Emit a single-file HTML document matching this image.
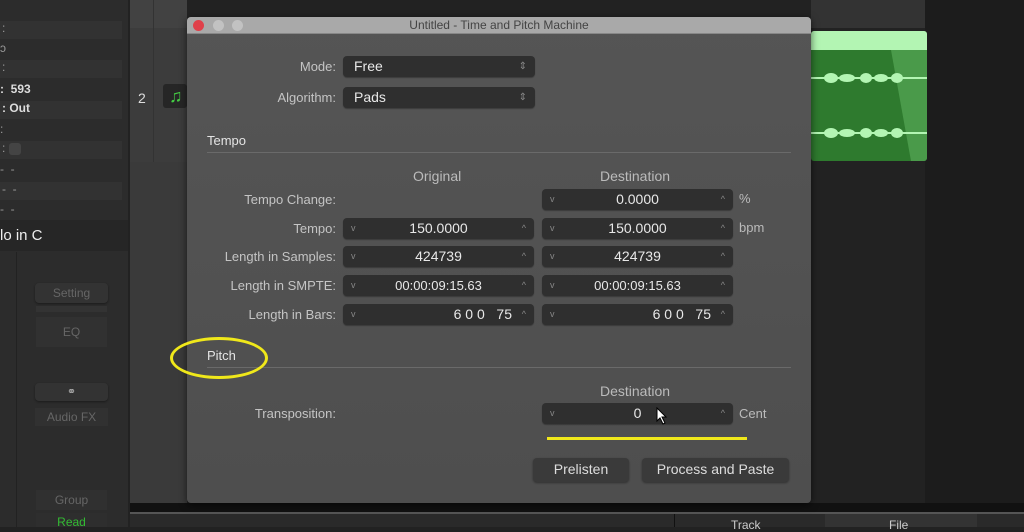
<!DOCTYPE html>
<html><head><meta charset="utf-8"><style>
*{margin:0;padding:0;box-sizing:border-box}
body{width:1024px;height:527px;overflow:hidden;background:#222;font-family:"Liberation Sans",sans-serif;position:relative}
.a{position:absolute}
.lbl{position:absolute;color:#c4c4c4;font-size:13px;text-align:right;width:200px}
.fld{position:absolute;background:#2f2f2f;border-radius:4px;height:21px;color:#e8e8e8;font-size:14px;text-align:center;line-height:21px;box-shadow:0 1px 1px rgba(0,0,0,.3)}
.fld .d{position:absolute;left:8px;top:0;font-size:9px;color:#888}
.fld .u{position:absolute;right:8px;top:0;font-size:9px;color:#888}
.btn{position:absolute;background:#3a3a3a;border-radius:4px;color:#ddd;font-size:14px;text-align:center;line-height:23px;height:24px;box-shadow:0 1px 2px rgba(0,0,0,.4)}
.hl{position:absolute;height:1px;background:#6a6a6a}
.lp{position:absolute;left:0;width:122px;height:18px;background:#323232;color:#ddd;font-size:12px;padding-left:2px}
</style></head><body>
<div class="a" style="left:0;top:0;width:128px;height:527px;background:#2c2c2c"></div>
<div class="lp" style="top:21px;color:#999">:</div>
<div class="a" style="left:0;top:41px;color:#999;font-size:12px">ↄ</div>
<div class="lp" style="top:60px;color:#999">:</div>
<div class="a" style="left:0;top:82px;color:#ddd;font-size:12px;font-weight:bold">: &nbsp;593</div>
<div class="lp" style="top:101px;font-weight:bold">: Out</div>
<div class="a" style="left:0;top:122px;color:#999;font-size:12px">:</div>
<div class="lp" style="top:141px;color:#999">: <span style="display:inline-block;width:12px;height:12px;background:#444;border-radius:3px;vertical-align:middle"></span></div>
<div class="a" style="left:0;top:162px;color:#999;font-size:12px">- &nbsp;-</div>
<div class="lp" style="top:182px;color:#999">- &nbsp;-</div>
<div class="a" style="left:0;top:202px;color:#999;font-size:12px">- &nbsp;-</div>
<div class="a" style="left:0;top:220px;width:128px;height:31px;background:#262626;color:#eee;font-size:15px;padding:7px 0 0 0">lo in C</div>
<div class="a" style="left:16px;top:252px;width:1px;height:275px;background:#222"></div>
<div class="btn" style="left:35px;top:283px;width:73px;height:20px;line-height:20px;font-size:12px;color:#666;background:#333">Setting</div>
<div class="a" style="left:36px;top:306px;width:71px;height:6px;background:#333"></div>
<div class="a" style="left:36px;top:317px;width:71px;height:30px;background:#313131;color:#666;font-size:12px;text-align:center;line-height:30px">EQ</div>
<div class="btn" style="left:35px;top:383px;width:73px;height:18px;line-height:18px;font-size:11px;color:#aaa;background:#333">&#9901;</div>
<div class="a" style="left:35px;top:408px;width:73px;height:18px;background:#313131;color:#666;font-size:12px;text-align:center;line-height:18px">Audio FX</div>
<div class="a" style="left:36px;top:490px;width:71px;height:20px;background:#303030;color:#666;font-size:12px;text-align:center;line-height:20px">Group</div>
<div class="a" style="left:36px;top:513px;width:71px;height:14px;background:#2e2e2e;color:#3b3;font-size:12px;text-align:center;line-height:18px">Read</div>
<div class="a" style="left:130px;top:0;width:57px;height:503px;background:#3a3a3a"></div>
<div class="a" style="left:130px;top:0;width:57px;height:28px;background:#424242"></div>
<div class="a" style="left:130px;top:28px;width:57px;height:134px;background:#3c3c3c"></div>
<div class="a" style="left:153px;top:0;width:1px;height:162px;background:#333"></div>
<div class="a" style="left:138px;top:90px;color:#ddd;font-size:14px">2</div>
<div class="a" style="left:163px;top:84px;width:24px;height:24px;background:#262626;border-radius:3px;color:#4c4;font-size:18px;line-height:24px;padding-left:6px">♫</div>
<div class="a" style="left:811px;top:0;width:114px;height:28px;background:#333"></div>
<div class="a" style="left:925px;top:0;width:99px;height:503px;background:#1c1c1c"></div>
<div class="a" style="left:811px;top:31px;width:116px;height:130px;background:#2e7a2e;border-radius:3px;overflow:hidden">
<div class="a" style="left:0;top:0;width:116px;height:19px;background:#b3f5b3"></div>
<svg class="a" style="left:0;top:0" width="116" height="130"><polygon points="80,19 116,19 116,130 100,130" fill="#4a9a4a"/>
<g fill="#b3f5b3"><rect x="0" y="46" width="116" height="2"/><rect x="0" y="101" width="116" height="2"/>
<ellipse cx="20" cy="47" rx="7" ry="5"/><ellipse cx="36" cy="47" rx="8" ry="4"/><ellipse cx="55" cy="47" rx="6" ry="5"/><ellipse cx="70" cy="47" rx="7" ry="4"/><ellipse cx="86" cy="47" rx="6" ry="5"/>
<ellipse cx="20" cy="102" rx="7" ry="5"/><ellipse cx="36" cy="102" rx="8" ry="4"/><ellipse cx="55" cy="102" rx="6" ry="5"/><ellipse cx="70" cy="102" rx="7" ry="4"/><ellipse cx="86" cy="102" rx="6" ry="5"/></g></svg>
</div>
<div class="a" style="left:130px;top:503px;width:894px;height:10px;background:#111"></div>
<div class="a" style="left:130px;top:513px;width:894px;height:14px;background:#2a2a2a"></div>
<div class="a" style="left:130px;top:512px;width:894px;height:2px;background:#555"></div>
<div class="a" style="left:674px;top:514px;width:1px;height:13px;background:#111"></div>
<div class="a" style="left:825px;top:514px;width:152px;height:13px;background:#333"></div>
<div class="a" style="left:731px;top:518px;color:#ccc;font-size:12px">Track</div>
<div class="a" style="left:889px;top:518px;color:#ccc;font-size:12px">File</div>
<div class="a" style="left:187px;top:17px;width:624px;height:486px;background:linear-gradient(#555,#4e4e4e);border-radius:4px;box-shadow:0 2px 8px rgba(0,0,0,.6)"></div>
<div class="a" style="left:187px;top:17px;width:624px;height:17px;background:#a9a9a9;border-radius:4px 4px 0 0;border-bottom:1px solid #888;color:#444;font-size:12px;text-align:center;line-height:17px">Untitled - Time and Pitch Machine</div>
<div class="a" style="left:193px;top:20px;width:11px;height:11px;border-radius:50%;background:#e0404a"></div>
<div class="a" style="left:213px;top:20px;width:11px;height:11px;border-radius:50%;background:#c2c2c2"></div>
<div class="a" style="left:232px;top:20px;width:11px;height:11px;border-radius:50%;background:#c2c2c2"></div>
<div class="lbl" style="left:136px;top:59px">Mode:</div>
<div class="fld" style="left:343px;top:56px;width:192px;text-align:left;padding-left:11px;font-size:14px">Free<span class="u" style="font-size:10px">⇕</span></div>
<div class="lbl" style="left:136px;top:90px">Algorithm:</div>
<div class="fld" style="left:343px;top:87px;width:192px;text-align:left;padding-left:11px;font-size:14px">Pads<span class="u" style="font-size:10px">⇕</span></div>
<div class="a" style="left:207px;top:133px;color:#e4e4e4;font-size:13px">Tempo</div>
<div class="hl" style="left:207px;top:152px;width:584px"></div>
<div class="a" style="left:413px;top:168px;color:#bbb;font-size:14px">Original</div>
<div class="a" style="left:600px;top:168px;color:#bbb;font-size:14px">Destination</div>
<div class="lbl" style="left:136px;top:192px">Tempo Change:</div>
<div class="fld" style="left:542px;top:189px;width:191px"><span class="d">v</span>0.0000<span class="u">^</span></div>
<div class="a" style="left:739px;top:191px;color:#bbb;font-size:13px">%</div>
<div class="lbl" style="left:136px;top:221px">Tempo:</div>
<div class="fld" style="left:343px;top:218px;width:191px"><span class="d">v</span>150.0000<span class="u">^</span></div>
<div class="fld" style="left:542px;top:218px;width:191px"><span class="d">v</span>150.0000<span class="u">^</span></div>
<div class="a" style="left:739px;top:220px;color:#bbb;font-size:13px">bpm</div>
<div class="lbl" style="left:136px;top:249px">Length in Samples:</div>
<div class="fld" style="left:343px;top:246px;width:191px"><span class="d">v</span>424739<span class="u">^</span></div>
<div class="fld" style="left:542px;top:246px;width:191px"><span class="d">v</span>424739<span class="u">^</span></div>
<div class="lbl" style="left:136px;top:278px">Length in SMPTE:</div>
<div class="fld" style="left:343px;top:275px;width:191px;font-size:13px"><span class="d">v</span>00:00:09:15.63<span class="u">^</span></div>
<div class="fld" style="left:542px;top:275px;width:191px;font-size:13px"><span class="d">v</span>00:00:09:15.63<span class="u">^</span></div>
<div class="lbl" style="left:136px;top:307px">Length in Bars:</div>
<div class="fld" style="left:343px;top:304px;width:191px;text-align:right;padding-right:22px"><span class="d">v</span>6 0 0 &nbsp;&nbsp;75<span class="u">^</span></div>
<div class="fld" style="left:542px;top:304px;width:191px;text-align:right;padding-right:22px"><span class="d">v</span>6 0 0 &nbsp;&nbsp;75<span class="u">^</span></div>
<div class="a" style="left:207px;top:348px;color:#e4e4e4;font-size:13px">Pitch</div>
<div class="hl" style="left:207px;top:367px;width:584px"></div>
<div class="a" style="left:170px;top:337px;width:98px;height:42px;border:3px solid #f0e81a;border-radius:50%"></div>
<div class="a" style="left:600px;top:383px;color:#bbb;font-size:14px">Destination</div>
<div class="lbl" style="left:136px;top:406px">Transposition:</div>
<div class="fld" style="left:542px;top:403px;width:191px"><span class="d">v</span>0<span class="u">^</span></div>
<svg class="a" style="left:656px;top:407px" width="12" height="18"><path d="M1 1 L1 14 L4 11 L7 17 L9 16 L6 10 L10 10 Z" fill="#fff" stroke="#000" stroke-width="1"/></svg>
<div class="a" style="left:739px;top:406px;color:#bbb;font-size:13px">Cent</div>
<div class="a" style="left:547px;top:437px;width:200px;height:3px;background:#f0e81a"></div>
<div class="btn" style="left:533px;top:458px;width:96px">Prelisten</div>
<div class="btn" style="left:642px;top:458px;width:147px">Process and Paste</div>
</body></html>
